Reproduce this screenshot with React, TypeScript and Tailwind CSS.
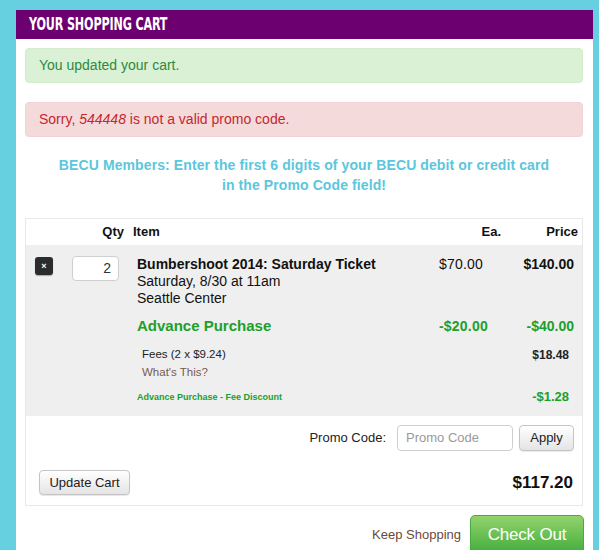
import type { FC } from 'react'

const sans = "font-['Liberation_Sans','Helvetica','Arial',sans-serif]"

const ItemRow: FC = () => (
  <div className="bg-[#efefef] pt-[11px] pb-[12px] text-[#111]">
    {/* ticket line */}
    <div className="flex items-start pr-[8px]">
      <button
        type="button"
        className="ml-[9px] mt-[1px] flex h-[18px] w-[18px] items-center justify-center rounded-[3px] bg-[#2b2b2b] text-[9px] font-bold leading-none text-white shadow-[0_1px_1px_rgba(0,0,0,0.3)]"
      >
        ×
      </button>
      <div className="ml-[19px] flex h-[25px] w-[47px] items-center justify-end rounded-[4px] border border-[#cfcfcf] bg-white pr-[7px] text-[14px] text-[#333]">
        2
      </div>
      <div className="ml-[18px] flex-1 text-[14px] leading-[17px]">
        <div className="font-bold">Bumbershoot 2014: Saturday Ticket</div>
        <div>Saturday, 8/30 at 11am</div>
        <div>Seattle Center</div>
      </div>
      <div className="w-[61px] text-[14px] leading-[17px] tracking-[0.2px]">$70.00</div>
      <div className="w-[74px] text-right text-[14px] font-bold leading-[17px]">$140.00</div>
    </div>

    {/* discount */}
    <div className="mt-[10px] flex items-center pl-[111px] pr-[8px] text-[15px] font-bold leading-[18px] text-[#1c9f2b]">
      <div className="flex-1">Advance Purchase</div>
      <div className="w-[61px] text-[14px] tracking-[0.2px]">-$20.00</div>
      <div className="w-[74px] text-right text-[14px]">-$40.00</div>
    </div>

    {/* fees */}
    <div className="mt-[10px] flex items-start pl-[116px] pr-[13px]">
      <div className="flex-1 text-[11.5px] leading-[18px] text-[#222]">
        <div>Fees (2 x $9.24)</div>
        <div className="text-[#7a5a4d]">What's This?</div>
      </div>
      <div className="mt-[2px] text-[12px] font-bold leading-[16px] text-[#222]">$18.48</div>
    </div>

    <div className="mt-[9px] flex items-center pl-[111px] pr-[13px] font-bold text-[#1c9f2b]">
      <div className="flex-1 text-[9px] leading-[14px]">Advance Purchase - Fee Discount</div>
      <div className="text-[13px] leading-[14px]">-$1.28</div>
    </div>
  </div>
)

const App: FC = () => {
  return (
    <div className={`${sans} h-[550px] w-[599px] overflow-hidden bg-[#66cfe0] pt-[10px] pl-[16px] pr-[6px]`}>
      <div className="h-full bg-white">
        <div className="flex h-[29px] items-center bg-[#6c0071] px-[13px]">
          <h1 className="origin-left scale-x-[0.73] whitespace-nowrap font-['DejaVu_Sans_Condensed','Liberation_Sans_Narrow',sans-serif] text-[17px] font-bold uppercase leading-none tracking-[-0.2px] text-white">
            Your Shopping Cart
          </h1>
        </div>

        <div className="pl-[9px] pr-[10px]">
          <div className="mt-[9px] flex h-[35px] items-center rounded-[4px] border border-[#d3eccb] bg-[#daf1d5] pl-[13px] text-[14px] text-[#2e8a3c]">
            You updated your cart.
          </div>
          <div className="mt-[19px] flex h-[35px] items-center rounded-[4px] border border-[#f1d3d5] bg-[#f5dadc] pl-[13px] text-[14px] text-[#c4282d]">
            Sorry,&nbsp;<span className="italic">544448</span>&nbsp;is not a valid promo code.
          </div>

          <p className="mt-[18px] text-center text-[14px] font-bold leading-[20px] tracking-[0.1px] text-[#5bc6dd]">
            BECU Members: Enter the first 6 digits of your BECU debit or credit card
            <br />
            in the Promo Code field!
          </p>

          <div className="mt-[23px] border border-[#e8e8e8]">
            <div className="flex h-[26px] items-center pr-[4px] text-[13px] font-bold text-[#111]">
              <div className="w-[98px] text-right">Qty</div>
              <div className="ml-[9px] flex-1">Item</div>
              <div className="w-[50px] text-right">Ea.</div>
              <div className="w-[77px] text-right">Price</div>
            </div>

            <ItemRow />

            <div className="pt-[9px] pb-[9px]">
              <div className="flex items-center justify-end pr-[8px]">
                <span className="text-[13px] text-[#222]">Promo Code:</span>
                <div className="ml-[11px] flex h-[26px] w-[116px] items-center rounded-[4px] border border-[#cfcfcf] bg-white pl-[8px] text-[13px] text-[#9a9a9a]">
                  Promo Code
                </div>
                <button
                  type="button"
                  className="ml-[6px] h-[26px] w-[55px] rounded-[4px] border border-[#c4c4c4] bg-gradient-to-b from-white to-[#e4e4e4] text-[13px] text-[#222] shadow-[0_1px_1px_rgba(0,0,0,0.08)]"
                >
                  Apply
                </button>
              </div>
              <div className="mt-[19px] flex items-center justify-between pl-[13px] pr-[9px]">
                <button
                  type="button"
                  className="h-[25px] w-[91px] rounded-[4px] border border-[#c4c4c4] bg-gradient-to-b from-white to-[#e4e4e4] text-[13px] text-[#222] shadow-[0_1px_1px_rgba(0,0,0,0.1)]"
                >
                  Update Cart
                </button>
                <span className="text-[17px] font-bold text-[#111]">$117.20</span>
              </div>
            </div>
          </div>

          <div className="mt-[9px] flex items-start justify-end">
            <a className="mt-[10px] text-[13px] text-[#6b4a3c]">Keep Shopping</a>
            <button
              type="button"
              className="mr-[-1px] ml-[9px] h-[41px] w-[114px] rounded-[5px] border border-[#4aa93f] bg-gradient-to-b from-[#91d36c] to-[#3aab3a] text-[17px] tracking-[-0.2px] text-white"
            >
              Check Out
            </button>
          </div>
        </div>
      </div>
    </div>
  )
}

export default App
